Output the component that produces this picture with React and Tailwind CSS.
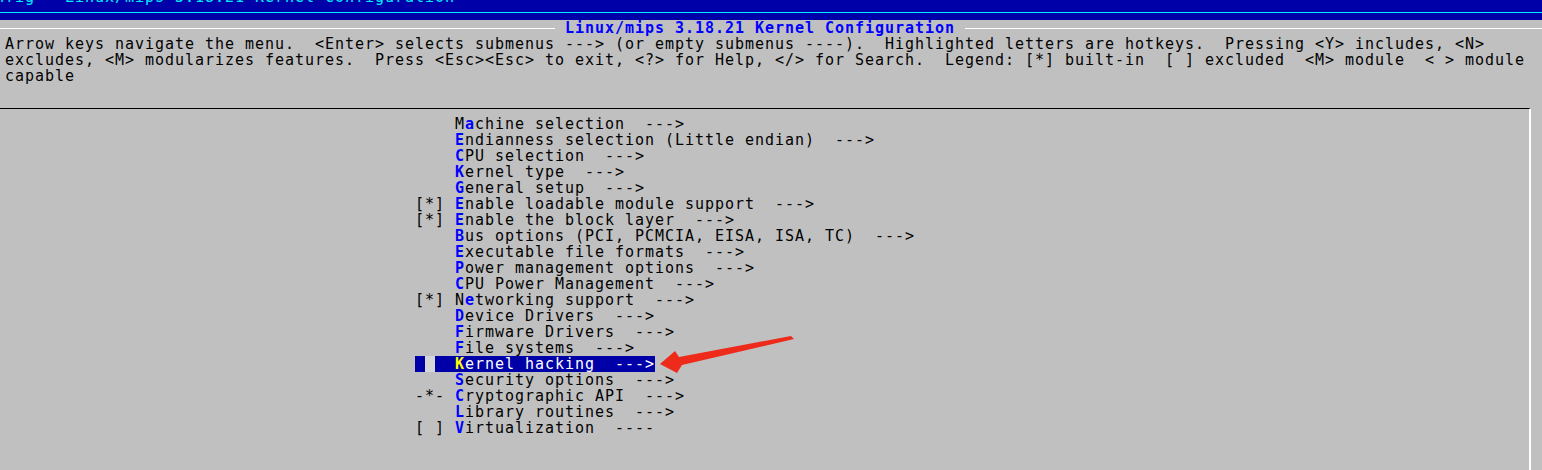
import React from "react";

const items = [
  { p: "    ", t: "Machine selection  --->", h: 1 },
  { p: "    ", t: "Endianness selection (Little endian)  --->", h: 0 },
  { p: "    ", t: "CPU selection  --->", h: 0 },
  { p: "    ", t: "Kernel type  --->", h: 0 },
  { p: "    ", t: "General setup  --->", h: 0 },
  { p: "[*] ", t: "Enable loadable module support  --->", h: 0 },
  { p: "[*] ", t: "Enable the block layer  --->", h: 0 },
  { p: "    ", t: "Bus options (PCI, PCMCIA, EISA, ISA, TC)  --->", h: 0 },
  { p: "    ", t: "Executable file formats  --->", h: 0 },
  { p: "    ", t: "Power management options  --->", h: 0 },
  { p: "    ", t: "CPU Power Management  --->", h: 0 },
  { p: "[*] ", t: "Networking support  --->", h: 1 },
  { p: "    ", t: "Device Drivers  --->", h: 0 },
  { p: "    ", t: "Firmware Drivers  --->", h: 0 },
  { p: "    ", t: "File systems  --->", h: 0 },
  { p: "    ", t: "Kernel hacking  --->", h: 0, sel: true },
  { p: "    ", t: "Security options  --->", h: 0 },
  { p: "-*- ", t: "Cryptographic API  --->", h: 0 },
  { p: "    ", t: "Library routines  --->", h: 0 },
  { p: "[ ] ", t: "Virtualization  ----", h: 0 },
];

const MenuRow = ({ item }) => {
  const before = item.t.slice(0, item.h);
  const key = item.t[item.h];
  const after = item.t.slice(item.h + 1);

  if (item.sel) {
    return (
      <div className="flex h-[16px] pl-[415px]">
        <span className="w-[10px] h-full bg-[#0000a8]"></span>
        <span className="w-[10px] h-full bg-[#d6d6d6]"></span>
        <span className="bg-[#0000a8] text-white whitespace-pre">
          {"  "}
          <span className="text-[#ffff00] font-bold">{key}</span>
          {after}
        </span>
      </div>
    );
  }

  return (
    <div className="h-[16px] pl-[415px] whitespace-pre text-black">
      {item.p}
      {before}
      <span className="text-[#0000ff] font-bold">{key}</span>
      {after}
    </div>
  );
};

export default function App() {
  return (
    <div className="relative w-full h-[470px] overflow-hidden bg-[#c0c0c0] font-['DejaVu_Sans_Mono',monospace] text-[15px] leading-[16px] tracking-[0.97px]">
      {/* back title bar, scrolled mostly out of view */}
      <div className="h-[20px] bg-[#0000a8] flex flex-col overflow-hidden">
        <div className="-mt-[11px] -ml-[35px] h-[16px] text-[#00f0ff] whitespace-pre">
          .config - Linux/mips 3.18.21 Kernel Configuration
        </div>
        <div className="mt-[7px] h-px bg-[#00f0ff]"></div>
      </div>

      {/* dialog title */}
      <div className="flex items-center h-[16px]">
        <div className="w-[555px] h-px bg-white"></div>
        <div className="w-[410px] text-center text-[#0000ff] font-bold whitespace-pre">
          Linux/mips 3.18.21 Kernel Configuration
        </div>
        <div className="flex-1 h-px bg-white"></div>
      </div>

      {/* help text */}
      <div className="pl-[5px] text-black whitespace-pre">
        <div>Arrow keys navigate the menu.  &lt;Enter&gt; selects submenus ---&gt; (or empty submenus ----).  Highlighted letters are hotkeys.  Pressing &lt;Y&gt; includes, &lt;N&gt;</div>
        <div>excludes, &lt;M&gt; modularizes features.  Press &lt;Esc&gt;&lt;Esc&gt; to exit, &lt;?&gt; for Help, &lt;/&gt; for Search.  Legend: [*] built-in  [ ] excluded  &lt;M&gt; module  &lt; &gt; module</div>
        <div>capable</div>
      </div>

      {/* menu box */}
      <div className="mt-[24px] w-[1531px] h-[400px] border-t border-t-black border-r-2 border-r-white pt-[7px]">
        {items.map((item, i) => (
          <MenuRow key={i} item={item} />
        ))}
      </div>

      {/* red annotation arrow */}
      <svg className="absolute inset-0 pointer-events-none" width="1542" height="470" viewBox="0 0 1542 470">
        <polygon
          points="660,364 675,351 679,357 791,336 794,339 682,365 677,373"
          fill="#ee2a1b"
        />
      </svg>
    </div>
  );
}
